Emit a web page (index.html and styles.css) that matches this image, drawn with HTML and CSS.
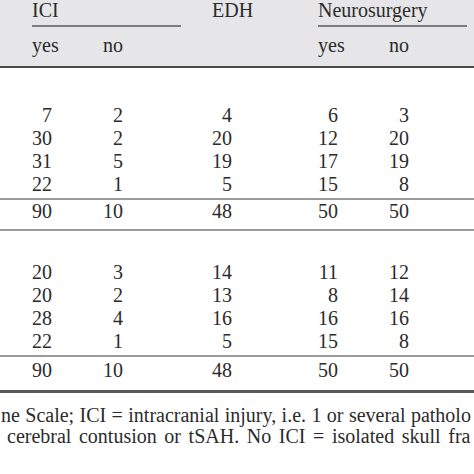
FILE: index.html
```html
<!DOCTYPE html>
<html>
<head>
<meta charset="utf-8">
<link rel="stylesheet" href="styles.css">
</head>
<body>
<div class="page">
  <div class="head">
    <div class="row r1">
      <div class="c span2"><div class="ul">ICI</div></div>
      <div class="c">EDH</div>
      <div class="c span2"><div class="ul">Neurosurgery</div></div>
    </div>
    <div class="row r2">
      <div class="c">yes</div>
      <div class="c">no</div>
      <div class="c"></div>
      <div class="c">yes</div>
      <div class="c">no</div>
    </div>
  </div>

  <div class="section s1">
    <div class="row"><div class="n">7</div><div class="n">2</div><div class="n">4</div><div class="n">6</div><div class="n">3</div></div>
    <div class="row"><div class="n">30</div><div class="n">2</div><div class="n">20</div><div class="n">12</div><div class="n">20</div></div>
    <div class="row"><div class="n">31</div><div class="n">5</div><div class="n">19</div><div class="n">17</div><div class="n">19</div></div>
    <div class="row"><div class="n">22</div><div class="n">1</div><div class="n">5</div><div class="n">15</div><div class="n">8</div></div>
    <div class="row total t1"><div class="n">90</div><div class="n">10</div><div class="n">48</div><div class="n">50</div><div class="n">50</div></div>
  </div>

  <div class="section s2">
    <div class="row"><div class="n">20</div><div class="n">3</div><div class="n">14</div><div class="n">11</div><div class="n">12</div></div>
    <div class="row"><div class="n">20</div><div class="n">2</div><div class="n">13</div><div class="n">8</div><div class="n">14</div></div>
    <div class="row"><div class="n">28</div><div class="n">4</div><div class="n">16</div><div class="n">16</div><div class="n">16</div></div>
    <div class="row"><div class="n">22</div><div class="n">1</div><div class="n">5</div><div class="n">15</div><div class="n">8</div></div>
    <div class="row total t2"><div class="n">90</div><div class="n">10</div><div class="n">48</div><div class="n">50</div><div class="n">50</div></div>
  </div>

  <div class="foot">
    <p class="l1">ne Scale; ICI = intracranial injury, i.e. 1 or several patholo</p>
    <p class="l2">cerebral contusion or tSAH. No ICI = isolated skull fra</p>
  </div>
</div>
</body>
</html>
```

FILE: styles.css
```css
html, body {
  margin: 0;
  padding: 0;
  background: #ffffff;
}
.page {
  width: 474px;
  height: 474px;
  overflow: hidden;
  font-family: "Liberation Serif", "Times New Roman", serif;
  font-size: 20px;
  color: #2b2b2b;
}
.row {
  display: grid;
  grid-template-columns: 71px 109px 106px 71px 1fr;
  padding-left: 32px;
  line-height: 23px;
  white-space: nowrap;
}
.head {
  background: #e6e6e8;
  border-bottom: 2px solid #4a4a4a;
}
.r1 {
  line-height: 20px;
}
.span2 {
  grid-column: span 2;
}
.ul {
  width: 149px;
  padding-bottom: 5px;
  border-bottom: 2px solid #7c7c7c;
}
.r2 {
  padding-top: 7px;
  padding-bottom: 9px;
}
.n {
  width: 20px;
  text-align: right;
}
.s1 {
  padding-top: 36px;
}
.s2 {
  padding-top: 30px;
}
.total {
  margin-top: 2px;
  border-top: 2px solid #9a9a9a;
}
.t1 {
  padding-bottom: 6px;
  border-bottom: 2px solid #9a9a9a;
}
.t2 {
  padding-top: 2px;
  padding-bottom: 8px;
  border-bottom: 3px solid #5a5a5a;
}
.foot {
  margin-top: 12px;
  line-height: 21px;
  white-space: nowrap;
}
.foot p {
  margin: 0;
}
.l1 {
  padding-left: 1px;
  word-spacing: 0.4px;
}
.l2 {
  padding-left: 7px;
  word-spacing: 2.6px;
}
```
